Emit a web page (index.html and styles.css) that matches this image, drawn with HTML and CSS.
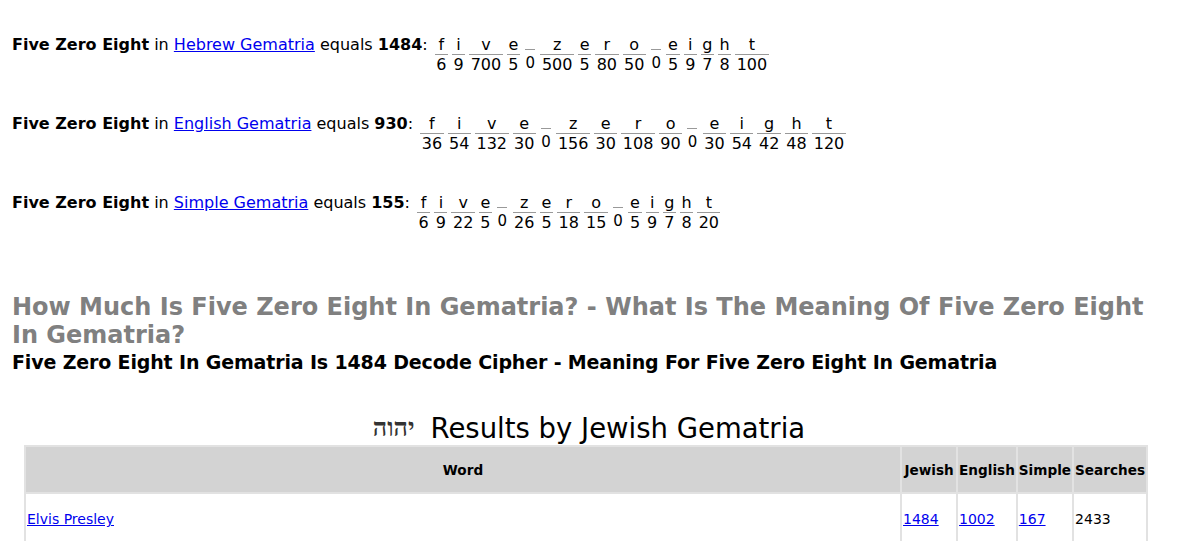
FILE: index.html
```html
<!DOCTYPE html>
<html lang="en">
<head>
    <meta charset="UTF-8">
    <title>Five Zero Eight in Gematria</title>
    <link rel="stylesheet" href="styles.css">
</head>
<body>
    <div class="page">

        <p class="calc"><b>Five Zero Eight</b> in <a href="#">Hebrew Gematria</a> equals <b>1484</b>:
            <span class="frac"><span class="ch">f</span><span class="num">6</span></span><span class="frac"><span class="ch">i</span><span class="num">9</span></span><span class="frac"><span class="ch">v</span><span class="num">700</span></span><span class="frac"><span class="ch">e</span><span class="num">5</span></span><span class="frac gap"><span class="ch"></span><span class="num">0</span></span><span class="frac"><span class="ch">z</span><span class="num">500</span></span><span class="frac"><span class="ch">e</span><span class="num">5</span></span><span class="frac"><span class="ch">r</span><span class="num">80</span></span><span class="frac"><span class="ch">o</span><span class="num">50</span></span><span class="frac gap"><span class="ch"></span><span class="num">0</span></span><span class="frac"><span class="ch">e</span><span class="num">5</span></span><span class="frac"><span class="ch">i</span><span class="num">9</span></span><span class="frac"><span class="ch">g</span><span class="num">7</span></span><span class="frac"><span class="ch">h</span><span class="num">8</span></span><span class="frac"><span class="ch">t</span><span class="num">100</span></span>
        </p>

        <p class="calc"><b>Five Zero Eight</b> in <a href="#">English Gematria</a> equals <b>930</b>:
            <span class="frac"><span class="ch">f</span><span class="num">36</span></span><span class="frac"><span class="ch">i</span><span class="num">54</span></span><span class="frac"><span class="ch">v</span><span class="num">132</span></span><span class="frac"><span class="ch">e</span><span class="num">30</span></span><span class="frac gap"><span class="ch"></span><span class="num">0</span></span><span class="frac"><span class="ch">z</span><span class="num">156</span></span><span class="frac"><span class="ch">e</span><span class="num">30</span></span><span class="frac"><span class="ch">r</span><span class="num">108</span></span><span class="frac"><span class="ch">o</span><span class="num">90</span></span><span class="frac gap"><span class="ch"></span><span class="num">0</span></span><span class="frac"><span class="ch">e</span><span class="num">30</span></span><span class="frac"><span class="ch">i</span><span class="num">54</span></span><span class="frac"><span class="ch">g</span><span class="num">42</span></span><span class="frac"><span class="ch">h</span><span class="num">48</span></span><span class="frac"><span class="ch">t</span><span class="num">120</span></span>
        </p>

        <p class="calc"><b>Five Zero Eight</b> in <a href="#">Simple Gematria</a> equals <b>155</b>:
            <span class="frac"><span class="ch">f</span><span class="num">6</span></span><span class="frac"><span class="ch">i</span><span class="num">9</span></span><span class="frac"><span class="ch">v</span><span class="num">22</span></span><span class="frac"><span class="ch">e</span><span class="num">5</span></span><span class="frac gap"><span class="ch"></span><span class="num">0</span></span><span class="frac"><span class="ch">z</span><span class="num">26</span></span><span class="frac"><span class="ch">e</span><span class="num">5</span></span><span class="frac"><span class="ch">r</span><span class="num">18</span></span><span class="frac"><span class="ch">o</span><span class="num">15</span></span><span class="frac gap"><span class="ch"></span><span class="num">0</span></span><span class="frac"><span class="ch">e</span><span class="num">5</span></span><span class="frac"><span class="ch">i</span><span class="num">9</span></span><span class="frac"><span class="ch">g</span><span class="num">7</span></span><span class="frac"><span class="ch">h</span><span class="num">8</span></span><span class="frac"><span class="ch">t</span><span class="num">20</span></span>
        </p>

        <h2 class="question">How Much Is Five Zero Eight In Gematria? - What Is The Meaning Of Five Zero Eight In Gematria?</h2>
        <h3 class="answer">Five Zero Eight In Gematria Is 1484 Decode Cipher - Meaning For Five Zero Eight In Gematria</h3>

        <div class="results">
            <div class="results-title"><span class="yhwh">יהוה</span>Results by Jewish Gematria</div>
            <table class="results-table">
                <tr>
                    <th>Word</th>
                    <th class="col-jewish">Jewish</th>
                    <th class="col-english">English</th>
                    <th class="col-simple">Simple</th>
                    <th class="col-searches">Searches</th>
                </tr>
                <tr>
                    <td><a href="#">Elvis Presley</a></td>
                    <td><a href="#">1484</a></td>
                    <td><a href="#">1002</a></td>
                    <td><a href="#">167</a></td>
                    <td>2433</td>
                </tr>
            </table>
        </div>

    </div>
</body>
</html>
```

FILE: styles.css
```css
body {
    margin: 0;
    font-family: "DejaVu Sans", Verdana, sans-serif;
    font-size: 16px;
    color: #000;
    background: #fff;
}

a {
    color: #0000ee;
}

.page {
    padding: 35px 0 0 12px;
}

/* calculation lines */
.calc {
    margin: 0 0 40px;
    line-height: 19px;
}

.frac {
    display: inline-flex;
    flex-direction: column;
    text-align: center;
    margin: 0 2px;
}

.frac .ch {
    display: block;
    padding: 0 1.5px;
    border-bottom: 1px solid #999;
}

.frac .num {
    display: block;
    padding: 0 1.5px;
}

.frac.gap .ch {
    height: 0;
    width: 10px;
    padding: 0;
    margin: 0 auto;
}

.frac.gap .num {
    font-size: 15px;
    line-height: 16px;
    padding-top: 5px;
}

/* headings */
.question {
    margin: 61px 0 0;
    font-size: 24px;
    line-height: 28px;
    color: #808080;
    padding-right: 30px;
}

.answer {
    margin: 0;
    padding-top: 1px;
    font-size: 19px;
    letter-spacing: -0.15px;
    line-height: 24px;
}

/* results */
.results {
    width: 1124px;
    margin: 37px 0 0 12px;
}

.results-title {
    text-align: center;
    font-size: 27.5px;
    line-height: 34px;
    padding-left: 6px;
}

.yhwh {
    font-family: "Liberation Serif", "DejaVu Serif", serif;
    font-size: 25px;
    font-weight: bold;
    color: #333;
    margin-right: 16px;
    vertical-align: 2px;
}

.results-table {
    width: 100%;
    border-collapse: collapse;
    font-size: 14px;
}

.results-table th,
.results-table td {
    border: 2px solid #e2e2e2;
    padding: 0 1px;
    text-align: left;
}

.results-table th {
    background: #d3d3d3;
    height: 45px;
    font-size: 13.6px;
    text-align: center;
}

.results-table td {
    height: 50px;
}

.col-jewish { width: 52px; }
.col-english { width: 53px; }
.col-simple { width: 50px; }
.col-searches { width: 69px; }
```
